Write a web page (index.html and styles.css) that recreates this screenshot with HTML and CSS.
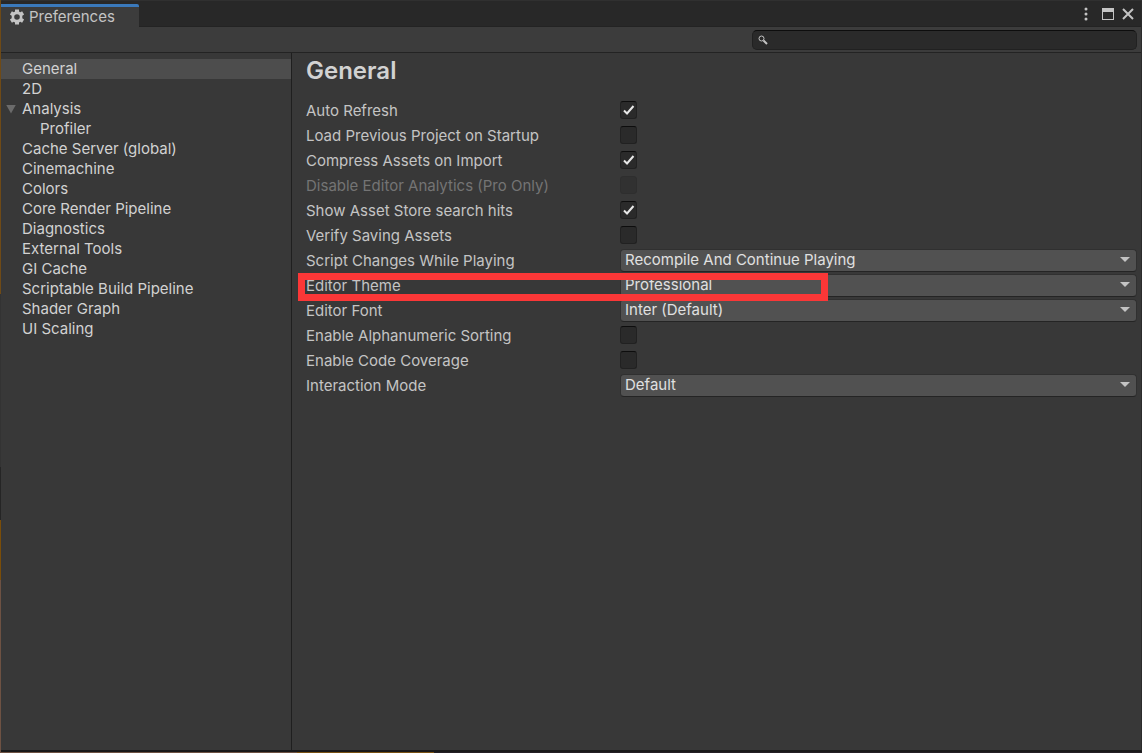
FILE: index.html
```html
<!DOCTYPE html>
<html lang="en">
<head>
    <meta charset="UTF-8">
    <meta name="viewport" content="width=device-width, initial-scale=1.0">
    <title>Preferences</title>
    <link rel="stylesheet" href="styles.css">
</head>
<body>

    <div class="window">
        <header class="titlebar">
            <div class="tab">
                <svg viewBox="0 0 16 16" width="16" height="16">
                    <path fill="#c4c4c4" fill-rule="evenodd" d="M6 .5h4v2l1.300.8 1.800-1 2 3.300-1.800 1.100v2.600l1.800 1.100-2 3.300-1.800-1-1.300.8v2H6v-2l-1.300-.8-1.800 1-2-3.300 1.800-1.100V6.700L.9 5.600l2-3.300 1.800 1L6 2.500zM8 5.200a2.800 2.800 0 1 0 0 5.600 2.800 2.800 0 0 0 0-5.600z"/>
                </svg>
                <span>Preferences</span>
            </div>
            <div class="window-buttons">
                <button type="button" aria-label="Menu">
                    <svg viewBox="0 0 14 14" width="14" height="14" fill="#c4c4c4">
                        <circle cx="7" cy="2" r="1.5"/>
                        <circle cx="7" cy="7" r="1.5"/>
                        <circle cx="7" cy="12" r="1.5"/>
                    </svg>
                </button>
                <button type="button" aria-label="Maximize">
                    <svg viewBox="0 0 14 14" width="14" height="14">
                        <path fill="#c4c4c4" fill-rule="evenodd" d="M1 1h12v12H1zM2 5v7h10V5z"/>
                    </svg>
                </button>
                <button type="button" aria-label="Close">
                    <svg viewBox="0 0 14 14" width="14" height="14">
                        <path fill="none" stroke="#c4c4c4" stroke-width="2" d="M2 2l10 10M12 2L2 12"/>
                    </svg>
                </button>
            </div>
        </header>

        <div class="toolbar">
            <label class="search">
                <svg viewBox="0 0 10 10" width="10" height="10" fill="none" stroke="#c4c4c4">
                    <circle cx="3.5" cy="3.5" r="2.5"/>
                    <path stroke-width="2" d="M5.5 5.5L9 9"/>
                </svg>
                <input type="text" aria-label="Search">
            </label>
        </div>

        <div class="content">
            <nav class="sidebar">
                <a href="#" class="selected">General</a>
                <a href="#">2D</a>
                <a href="#" class="parent">Analysis</a>
                <a href="#" class="child">Profiler</a>
                <a href="#">Cache Server (global)</a>
                <a href="#">Cinemachine</a>
                <a href="#">Colors</a>
                <a href="#">Core Render Pipeline</a>
                <a href="#">Diagnostics</a>
                <a href="#">External Tools</a>
                <a href="#">GI Cache</a>
                <a href="#">Scriptable Build Pipeline</a>
                <a href="#">Shader Graph</a>
                <a href="#">UI Scaling</a>
            </nav>

            <main class="settings">
                <h1>General</h1>
                <div class="row">
                    <label for="autoRefresh">Auto Refresh</label>
                    <input type="checkbox" id="autoRefresh" checked>
                </div>
                <div class="row">
                    <label for="loadPrevious">Load Previous Project on Startup</label>
                    <input type="checkbox" id="loadPrevious">
                </div>
                <div class="row">
                    <label for="compressAssets">Compress Assets on Import</label>
                    <input type="checkbox" id="compressAssets" checked>
                </div>
                <div class="row disabled">
                    <label for="disableAnalytics">Disable Editor Analytics (Pro Only)</label>
                    <input type="checkbox" id="disableAnalytics" disabled>
                </div>
                <div class="row">
                    <label for="searchHits">Show Asset Store search hits</label>
                    <input type="checkbox" id="searchHits" checked>
                </div>
                <div class="row">
                    <label for="verifySaving">Verify Saving Assets</label>
                    <input type="checkbox" id="verifySaving">
                </div>
                <div class="row">
                    <label for="scriptChanges">Script Changes While Playing</label>
                    <select id="scriptChanges">
                        <option>Recompile And Continue Playing</option>
                    </select>
                </div>
                <div class="row highlighted">
                    <label for="editorTheme">Editor Theme</label>
                    <select id="editorTheme">
                        <option>Professional</option>
                    </select>
                </div>
                <div class="row">
                    <label for="editorFont">Editor Font</label>
                    <select id="editorFont">
                        <option>Inter (Default)</option>
                    </select>
                </div>
                <div class="row">
                    <label for="alphaSorting">Enable Alphanumeric Sorting</label>
                    <input type="checkbox" id="alphaSorting">
                </div>
                <div class="row">
                    <label for="codeCoverage">Enable Code Coverage</label>
                    <input type="checkbox" id="codeCoverage">
                </div>
                <div class="row">
                    <label for="interactionMode">Interaction Mode</label>
                    <select id="interactionMode">
                        <option>Default</option>
                    </select>
                </div>
            </main>
        </div>
    </div>

</body>
</html>
```
FILE: styles.css
```css
*,
*::before,
*::after {
    box-sizing: border-box;
}
body {
    margin: 0;
    height: 100vh;
    padding: 1px 0 1px 1px;
    display: flex;
    font-family: Inter, sans-serif;
    font-size: 15px;
    color: #c4c4c4;
    /* Desktop showing at the left and bottom edges of the window */
    background-color: #303030;
    background-image:
        linear-gradient(to right, #6e5243 26%, #7a5214 26%, #7a5214 38%, #241f24 38%),
        linear-gradient(to bottom, #6f4a16 39%, #333 39%, #333 62%, #252525 62%, #252525 69%, #7a4d08 69%, #7a4d08 77%, #6e5243 77%);
    background-size: 100% 1px, 1px 100%;
    background-position: left bottom, left top;
    background-repeat: no-repeat;
}
.window {
    flex: 1;
    display: flex;
    flex-direction: column;
    background-color: #383838;
    border-right: 1px solid #2b2b2b;
    border-bottom: 2px solid #191919;
}
.titlebar {
    display: flex;
    justify-content: space-between;
    height: 26px;
    background-color: #282828;
    box-shadow: inset 0 -1px #232323;
}
.tab {
    display: flex;
    align-items: center;
    gap: 4px;
    width: 138px;
    margin-top: 3px;
    padding: 0 0 1px 8px;
    background-color: #3c3c3c;
    border-top: 3px solid #3a79bb;
    border-radius: 0 2px 0 0;
}
.window-buttons {
    display: flex;
    align-items: center;
    gap: 6px;
    padding-right: 6px;
}
.window-buttons button {
    display: flex;
    padding: 0;
    border: 0;
    background: none;
}
.window-buttons button:first-child {
    margin-right: 2px;
}
.toolbar {
    display: flex;
    justify-content: flex-end;
    height: 26px;
    padding: 3px 4px 2px 0;
    background-color: #3c3c3c;
    border-bottom: 1px solid #232323;
}
.search {
    display: flex;
    align-items: center;
    gap: 6px;
    width: 385px;
    padding: 0 5px;
    background-color: #2a2a2a;
    border: 1px solid #212121;
    border-top-color: #0d0d0d;
    border-radius: 5px;
}
.search input {
    flex: 1;
    min-width: 0;
    padding: 0;
    border: 0;
    outline: 0;
    background: none;
    color: inherit;
    font: inherit;
}
.content {
    flex: 1;
    display: flex;
}
.sidebar {
    width: 291px;
    padding-top: 6px;
    border-right: 1px solid #1f1f1f;
}
.sidebar a {
    display: block;
    height: 20px;
    padding-left: 21px;
    line-height: 20px;
    color: #d2d2d2;
    text-decoration: none;
}
.sidebar .selected {
    background-color: #4d4d4d;
}
.sidebar .child {
    padding-left: 39px;
}
.sidebar .parent {
    display: flex;
    align-items: center;
    gap: 6px;
    padding-left: 5px;
}
.parent::before {
    content: "";
    width: 10px;
    height: 9px;
    background-color: #6b6b6b;
    clip-path: polygon(0 0, 100% 0, 50% 100%);
}
.settings {
    flex: 1;
    padding: 3px 4px 0 14px;
}
h1 {
    margin: 0 0 12px;
    font-size: 24px;
    font-weight: 600;
    line-height: 30px;
    color: #d2d2d2;
}
.row {
    position: relative;
    display: grid;
    grid-template-columns: 314px 1fr;
    align-items: start;
    height: 25px;
    line-height: 25px;
}
.disabled {
    color: #747474;
}
input[type="checkbox"] {
    appearance: none;
    width: 17px;
    height: 18px;
    margin: 3px 0 0;
    background-color: #2a2a2a;
    border: 1px solid #212121;
    border-top-color: #0d0d0d;
    border-radius: 3px;
}
input[type="checkbox"]:checked {
    background-image: url("data:image/svg+xml,%3Csvg xmlns='http://www.w3.org/2000/svg' viewBox='0 0 15 16'%3E%3Cpath d='M3 8.5l3 3L12.5 4' fill='none' stroke='%23e8e8e8' stroke-width='2'/%3E%3C/svg%3E");
}
input[type="checkbox"]:disabled {
    background-color: #313131;
    border-color: #2e2e2e;
}
select {
    appearance: none;
    width: 100%;
    height: 23px;
    margin: 1px 0 0;
    padding: 0 20px 2px 4px;
    color: #e0e0e0;
    font: inherit;
    line-height: 18px;
    background: #515151 url("data:image/svg+xml,%3Csvg xmlns='http://www.w3.org/2000/svg' width='10' height='5'%3E%3Cpath d='M0 0h10L5 5z' fill='%23c4c4c4'/%3E%3C/svg%3E") no-repeat right 6px top 7px;
    border: 1px solid #303030;
    border-bottom-color: #242424;
    border-radius: 4px;
}
/* Red frame drawn round the theme setting */
.highlighted::after {
    content: "";
    position: absolute;
    z-index: 1;
    top: 0;
    left: -8px;
    width: 530px;
    height: 28px;
    border: 7px solid #fb3737;
}
```
